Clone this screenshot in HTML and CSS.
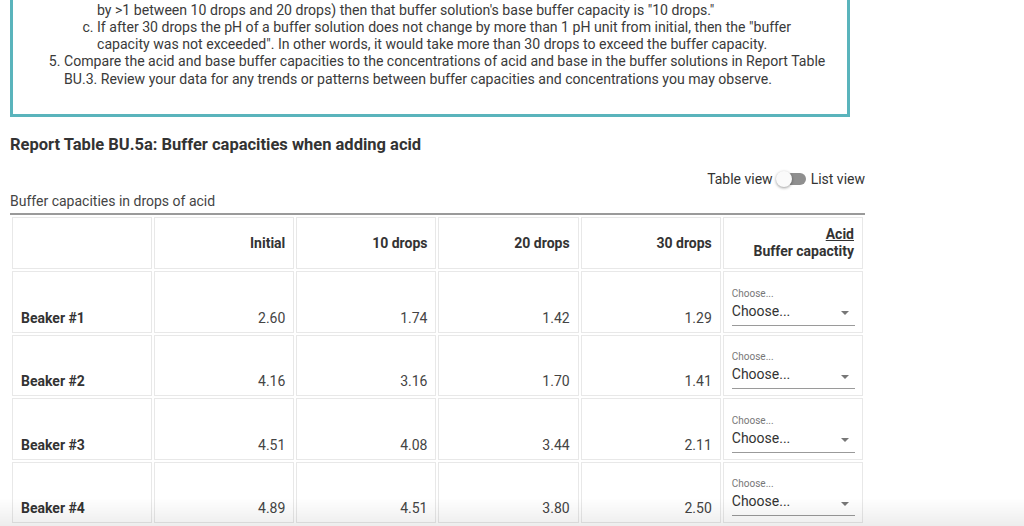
FILE: index.html
```html
<!DOCTYPE html>
<html lang="en">
<head>
<meta charset="utf-8">
<title>Report Table BU.5a</title>
<link rel="stylesheet" href="styles.css">
</head>
<body>
<div class="page">
  <div class="instructions">
    <ol class="steps" start="4">
      <li>Determine the buffer capacity of each buffer solution using the following guidelines:
        <ol class="sub" type="a" start="2">
          <li>If the pH of a buffer solution changes by more than 1 pH unit between two readings (for example, changing<br>by &gt;1 between 10 drops and 20 drops) then that buffer solution's base buffer capacity is "10 drops."</li>
          <li>If after 30 drops the pH of a buffer solution does not change by more than 1 pH unit from initial, then the "buffer<br>capacity was not exceeded". In other words, it would take more than 30 drops to exceed the buffer capacity.</li>
        </ol>
      </li>
      <li>Compare the acid and base buffer capacities to the concentrations of acid and base in the buffer solutions in Report Table<br>BU.3. Review your data for any trends or patterns between buffer capacities and concentrations you may observe.</li>
    </ol>
  </div>

  <h2 class="title">Report Table BU.5a: Buffer capacities when adding acid</h2>

  <div class="toggle-row">
    <span>Table view</span>
    <span class="switch"><span class="knob"></span></span>
    <span>List view</span>
  </div>

  <div class="caption">Buffer capacities in drops of acid</div>

  <table class="data">
    <thead>
      <tr>
        <th></th>
        <th>Initial</th>
        <th>10 drops</th>
        <th>20 drops</th>
        <th>30 drops</th>
        <th><span class="u">Acid</span><br>Buffer capactity</th>
      </tr>
    </thead>
    <tbody>
      <tr>
        <th class="rowh">Beaker #1</th>
        <td>2.60</td><td>1.74</td><td>1.42</td><td>1.29</td>
        <td class="sel"><div class="lbl">Choose...</div><div class="field"><span>Choose...</span><span class="caret"></span></div></td>
      </tr>
      <tr>
        <th class="rowh">Beaker #2</th>
        <td>4.16</td><td>3.16</td><td>1.70</td><td>1.41</td>
        <td class="sel"><div class="lbl">Choose...</div><div class="field"><span>Choose...</span><span class="caret"></span></div></td>
      </tr>
      <tr>
        <th class="rowh">Beaker #3</th>
        <td>4.51</td><td>4.08</td><td>3.44</td><td>2.11</td>
        <td class="sel"><div class="lbl">Choose...</div><div class="field"><span>Choose...</span><span class="caret"></span></div></td>
      </tr>
      <tr>
        <th class="rowh">Beaker #4</th>
        <td>4.89</td><td>4.51</td><td>3.80</td><td>2.50</td>
        <td class="sel"><div class="lbl">Choose...</div><div class="field"><span>Choose...</span><span class="caret"></span></div></td>
      </tr>
    </tbody>
  </table>
</div>
<div class="fade"></div>
</body>
</html>
```

FILE: styles.css
```css
html, body {
  margin: 0;
  padding: 0;
  background: #fff;
}
body {
  font-family: Roboto, "Liberation Sans", Arial, sans-serif;
  color: #333;
  font-size: 14px;
  overflow: hidden;
}
.page {
  padding: 0 10px;
  width: 855px;
}
.instructions {
  width: 840px;
  box-sizing: border-box;
  border: 3px solid #5ab4bc;
  margin-top: -46px;
  padding: 10px 0 26px 0;
  font-size: 14.1px;
  line-height: 17.3px;
  color: #3a3a3a;
}
.steps {
  margin: 0;
  padding-left: 51px;
  white-space: nowrap;
}
.sub {
  margin: 0;
  padding-left: 33px;
}
.title {
  font-size: 16.5px;
  font-weight: bold;
  margin: 18px 0 0 0;
  line-height: 20px;
  color: #333;
}
.toggle-row {
  display: flex;
  justify-content: flex-end;
  align-items: center;
  margin-top: 15px;
  font-size: 14px;
  line-height: 18px;
  color: #333;
}
.switch {
  position: relative;
  width: 28px;
  height: 12px;
  border-radius: 6px;
  background: #8f8f8f;
  margin: 0 5px 0 5px;
}
.knob {
  position: absolute;
  left: -2px;
  top: -2px;
  width: 16px;
  height: 16px;
  border-radius: 50%;
  background: #fafafa;
  box-shadow: 0 1px 3px rgba(0,0,0,0.4);
}
.caption {
  margin-top: 4px;
  font-size: 14px;
  line-height: 18px;
  color: #444;
  padding-bottom: 3px;
  border-bottom: 2px solid #9a9a9a;
}
.data {
  border-collapse: separate;
  border-spacing: 2px;
  width: 855px;
  margin: 0;
  table-layout: fixed;
}
.data th, .data td {
  border: 1px solid #e8e8e8;
  padding: 8px 8px;
  text-align: right;
  font-size: 14px;
  line-height: 17px;
  color: #333;
}
.data thead th {
  font-weight: bold;
  height: 34px;
  vertical-align: middle;
}
.u {
  text-decoration: underline;
}
.data tbody th, .data tbody td {
  height: 45.5px;
  vertical-align: bottom;
  padding-bottom: 5px;
}
.data tbody th.rowh {
  text-align: left;
  font-weight: bold;
}
.data tbody td {
  color: #444;
}
.data tbody td.sel {
  text-align: left;
  padding: 8px 7px 6px 8px;
}
.lbl {
  font-size: 10px;
  line-height: 12px;
  color: #777;
  margin-bottom: 3px;
}
.field {
  display: flex;
  justify-content: space-between;
  align-items: center;
  border-bottom: 1px solid #9a9a9a;
  padding-bottom: 5px;
  font-size: 14px;
  line-height: 17px;
  color: #333;
}
.caret {
  width: 0;
  height: 0;
  border-left: 4px solid transparent;
  border-right: 4px solid transparent;
  border-top: 4px solid #777;
  margin: 4px 6px 0 0;
}
.fade {
  position: fixed;
  left: 0;
  right: 0;
  bottom: 0;
  height: 28px;
  background: linear-gradient(to bottom, rgba(0,0,0,0), rgba(0,0,0,0.07));
  pointer-events: none;
}
```
